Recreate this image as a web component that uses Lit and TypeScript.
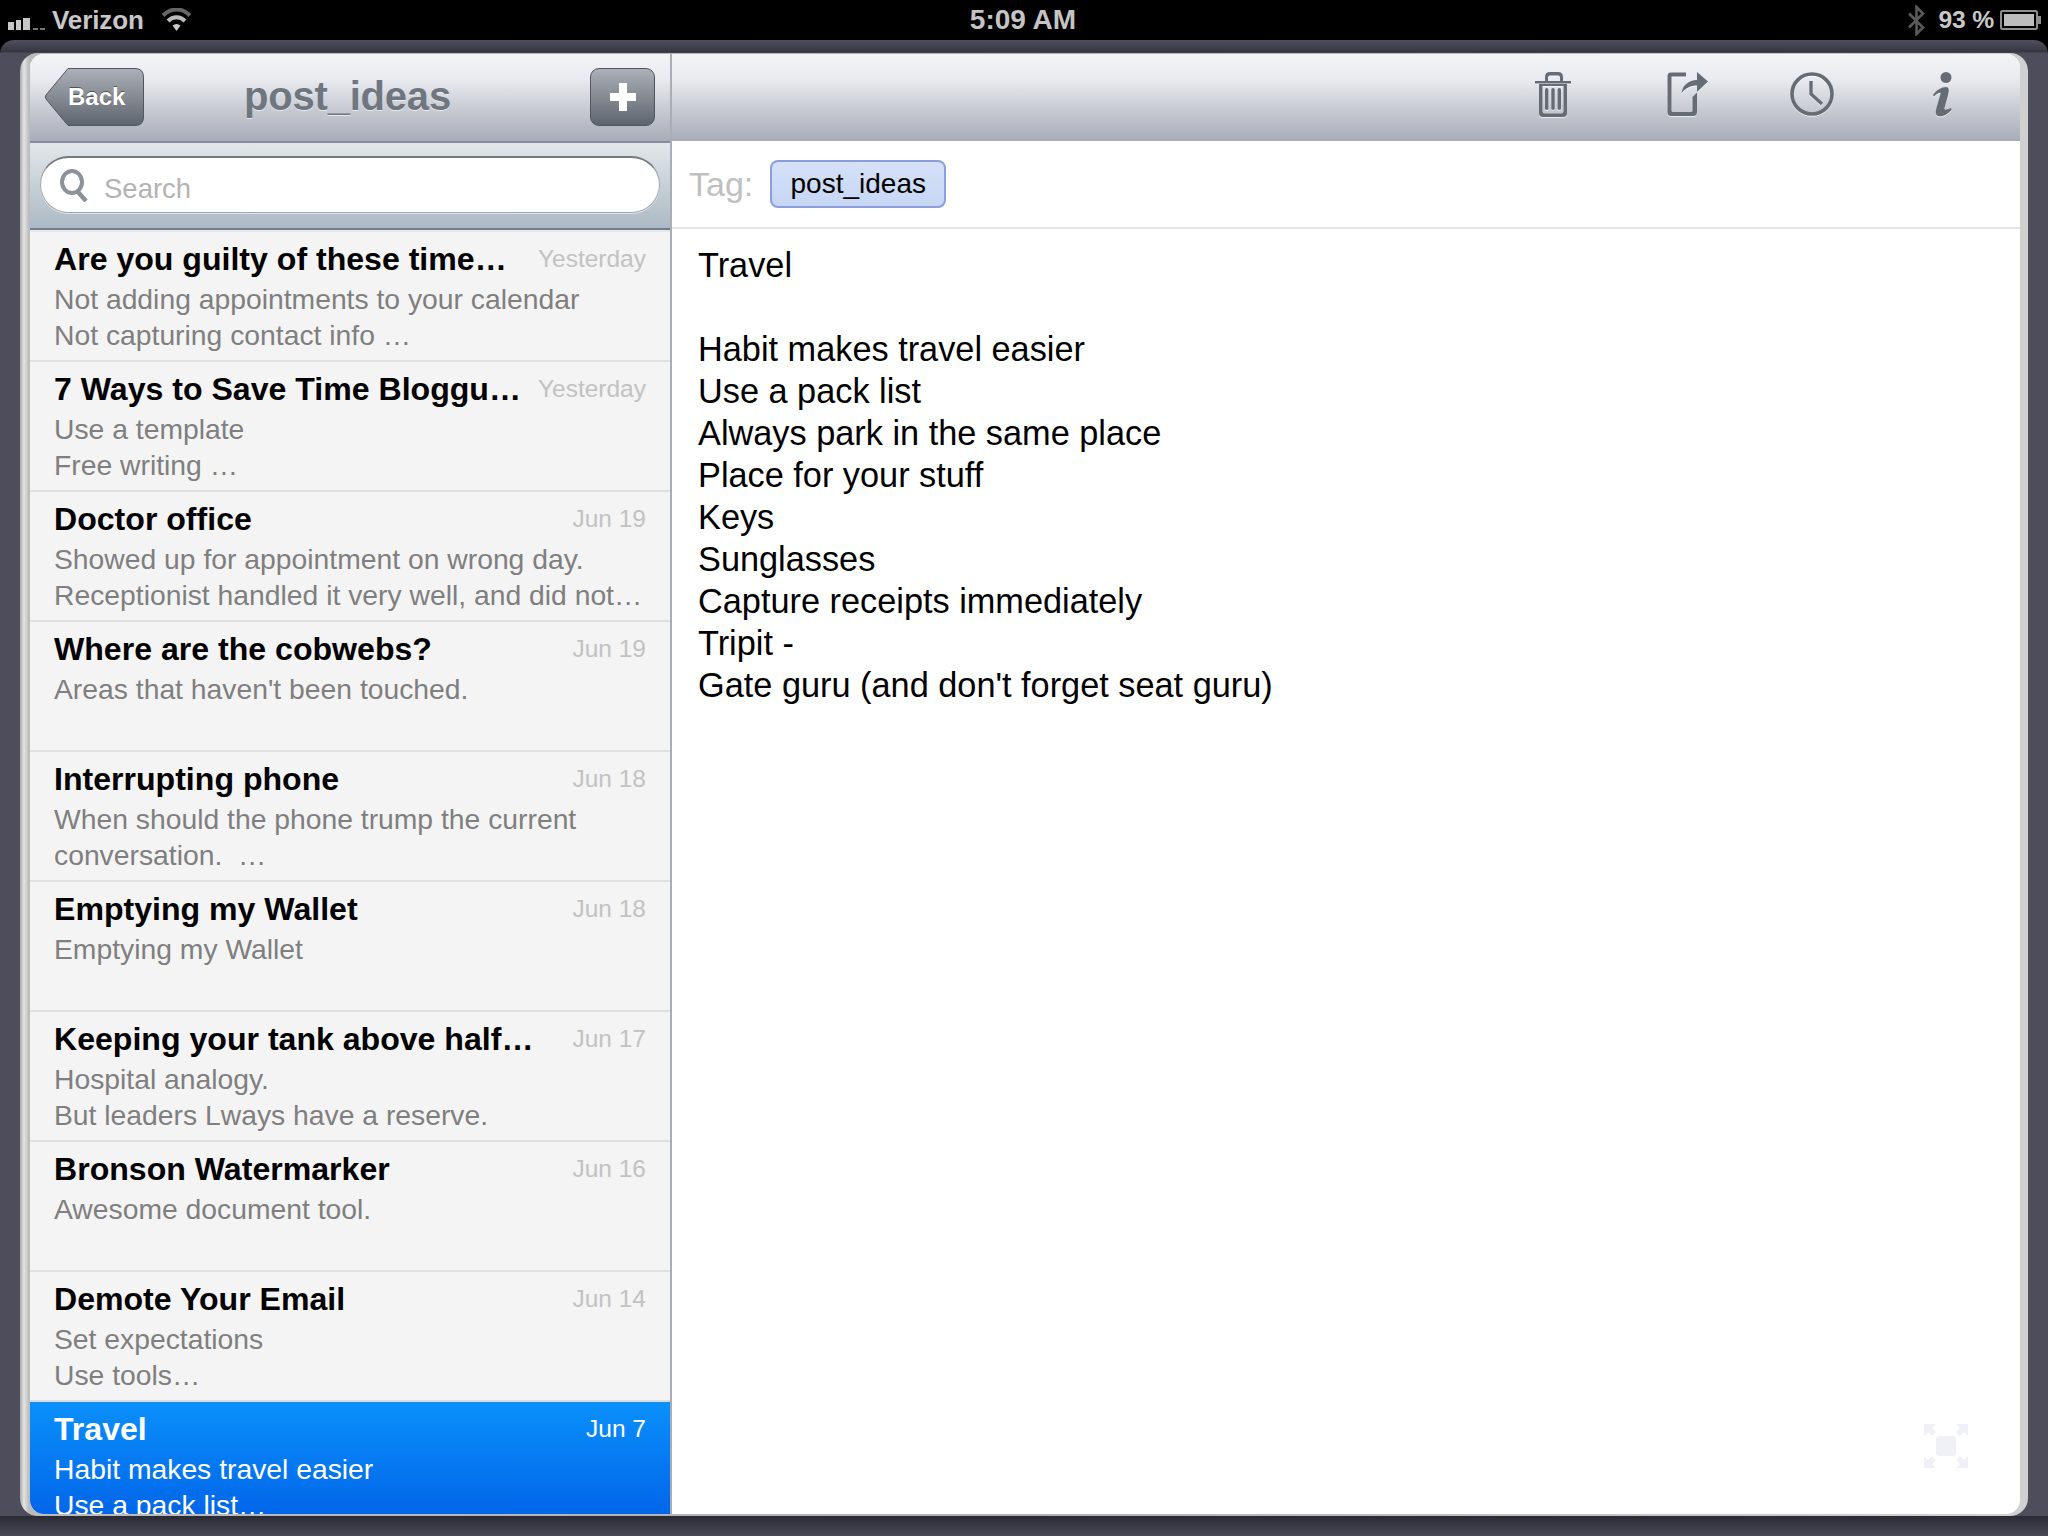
import { LitElement, html, css } from "lit";
import { customElement } from "lit/decorators.js";

interface Note { title: string; date: string; l1: string; l2: string; selected?: boolean; }

const NOTES: Note[] = [
  { title: "Are you guilty of these time…", date: "Yesterday", l1: "Not adding appointments to your calendar", l2: "Not capturing contact info …" },
  { title: "7 Ways to Save Time Bloggu…", date: "Yesterday", l1: "Use a template", l2: "Free writing …" },
  { title: "Doctor office", date: "Jun 19", l1: "Showed up for appointment on wrong day.", l2: "Receptionist handled it very well, and did not…" },
  { title: "Where are the cobwebs?", date: "Jun 19", l1: "Areas that haven't been touched.", l2: "" },
  { title: "Interrupting phone", date: "Jun 18", l1: "When should the phone trump the current", l2: "conversation.  …" },
  { title: "Emptying my Wallet", date: "Jun 18", l1: "Emptying my Wallet", l2: "" },
  { title: "Keeping your tank above half…", date: "Jun 17", l1: "Hospital analogy.", l2: "But leaders Lways have a reserve." },
  { title: "Bronson Watermarker", date: "Jun 16", l1: "Awesome document tool.", l2: "" },
  { title: "Demote Your Email", date: "Jun 14", l1: "Set expectations", l2: "Use tools…" },
  { title: "Travel", date: "Jun 7", l1: "Habit makes travel easier", l2: "Use a pack list…", selected: true },
];

const BODY = ["Travel", "", "Habit makes travel easier", "Use a pack list", "Always park in the same place", "Place for your stuff", "Keys", "Sunglasses", "Capture receipts immediately", "Tripit -", "Gate guru (and don't forget seat guru)"];

const FONT = css`"Liberation Sans", Arial, sans-serif`;

@customElement("app-root")
export class AppRoot extends LitElement {
  static styles = css`
    :host { display: block; width: 2048px; height: 1536px; background: #000; overflow: hidden; font-family: ${FONT}; }
    .screen { display: flex; flex-direction: column; height: 1536px; }

    .status { height: 40px; flex: none; display: flex; align-items: center; color: #c8c8c8; font-weight: bold; position: relative; padding: 0 7px 0 8px; box-sizing: border-box; }
    .status .signal { width: 37px; height: 12px; margin-top: 8px; display: block; }
    .status .carrier { font-size: 26px; margin-left: 7px; letter-spacing: -0.1px; }
    .status .wifi { width: 31px; height: 23px; margin-left: 17px; margin-top: -1px; display: block; }
    .status .clock { position: absolute; left: 0; right: 2px; top: 0; height: 40px; line-height: 39px; text-align: center; font-size: 28px; color: #c4c4c4; }
    .status .right { margin-left: auto; display: flex; align-items: center; }
    .status .bt { width: 17px; height: 31px; display: block; }
    .status .pct { font-size: 24.7px; margin-left: 14px; letter-spacing: -0.2px; }
    .status .batt { width: 41px; height: 20px; margin-left: 6px; display: block; }

    .frame { flex: 1; min-height: 0; display: flex; padding: 13px 20px 20px 20px; border-radius: 14px 14px 0 0;
      background: linear-gradient(#4f4f5e 0, #363642 12px, #4d4d5c 13px, #4d4d5c 1476px, #2a2a35 1476px, #4a4a58 1496px); }
    .app { flex: 1; min-width: 0; display: flex; border-radius: 18px; overflow: hidden; padding: 1px 8px 2px 10px;
      background: linear-gradient(90deg, #a9a9ab 0, #e4e4e4 4px, #bbbbbb 9px, #b0b0b0 50%, #d0d0d0 2000px); }
    .app-inner { flex: 1; min-width: 0; display: flex; overflow: hidden; background: #fff; border-radius: 14px; }

    .side { width: 640px; flex: none; display: flex; flex-direction: column; overflow: hidden; }
    .nav { height: 87px; flex: none; box-sizing: border-box; background: linear-gradient(#f3f4f7 0, #e9eaef 30%, #c9ccd4 62%, #a8acb8 100%); }
    .side .nav { display: flex; align-items: flex-start; padding: 14px 15px 0 14px; border-bottom: 2px solid #858c9e; height: 89px; }
    .back { width: 100px; height: 58px; position: relative; flex: none; color: #fff; font-weight: bold; font-size: 24px; line-height: 57px; text-shadow: 0 -1px 0 rgba(0,0,0,.45); }
    .back svg { position: absolute; left: 0; top: 0; display: block; }
    .back span { position: absolute; left: 24px; top: 0; }
    .title { margin-left: 100px; font-size: 40px; line-height: 56px; font-weight: bold; color: #6f7680; text-shadow: 0 1px 0 rgba(255,255,255,.6); letter-spacing: -0.2px; }
    .plus { margin-left: auto; width: 65px; height: 58px; box-sizing: border-box; border: 1px solid #50565f; border-radius: 9px; flex: none;
      background: linear-gradient(#acb0b8, #5e646e); display: flex; align-items: center; justify-content: center; }
    .plus svg { display: block; }

    .search { height: 87px; flex: none; box-sizing: border-box; padding: 13px 10px 0 10px; border-bottom: 2px solid #6d7e8d;
      background: linear-gradient(#e3e7ea, #acb9c4); }
    .pill { height: 57px; box-sizing: border-box; border-radius: 29px; background: #fff; border: 1px solid #9ea6ad; border-top: 2px solid #74797e; display: flex; align-items: center; padding-left: 19px; box-shadow: 0 1px 0 rgba(255,255,255,.6); }
    .pill svg { display: block; width: 28px; height: 34px; }
    .pill span { margin-left: 16px; font-size: 27.5px; line-height: 34px; padding-top: 8px; color: #b3b3b3; }

    .list { flex: 1; min-height: 0; overflow: hidden; background: #f4f4f4; }
    .row { height: 130px; box-sizing: border-box; padding: 7px 24px 0 24px; border-top: 2px solid #e0e0e0; overflow: hidden; }
    .row.first { border-top-color: #e6e8ea; }
    .row.sel { border-top-color: #dcdcdc; background: linear-gradient(#0a90fb, #0060e6); }
    .top { display: flex; align-items: flex-start; justify-content: space-between; height: 42px; }
    .name { font-size: 32.1px; line-height: 41px; font-weight: bold; color: #000; white-space: pre; }
    .date { font-size: 24.5px; line-height: 40px; color: #c2c2c2; }
    .sub { font-size: 28.3px; line-height: 36px; color: #7f7f7f; white-space: pre; height: 36px; }
    .row.sel .name, .row.sel .date, .row.sel .sub { color: #fff; }

    .divider { width: 2px; flex: none; background: #a9adb5; }

    .main { flex: 1; min-width: 0; display: flex; flex-direction: column; position: relative; }
    .main .nav { padding-top: 18px; display: flex; align-items: flex-start; }
    .tools-wrap { display: flex; align-items: flex-start; filter: drop-shadow(0 1px 0 rgba(255,255,255,.65)); }
    .tools-wrap svg { display: block; fill: #666c75; }
    .i-trash { margin-left: 863px; }
    .i-share { margin-left: 96px; }
    .i-clock { margin-left: 82px; }
    .i-info { margin-left: 98px; }
    .tagrow { height: 88px; flex: none; box-sizing: border-box; display: flex; align-items: flex-start; padding: 19px 0 0 17px; border-bottom: 2px solid #e4e6e9; }
    .tagrow .lbl { font-size: 34px; line-height: 48px; color: #c0c0c0; }
    .chip { margin-left: 17px; height: 48px; width: 176px; box-sizing: border-box; border: 2px solid #8a9ee0; border-radius: 8px; background: linear-gradient(#d6e1f8, #c6d6f4); font-size: 28px; line-height: 44px; text-align: center; color: #000; }
    .note { padding: 15px 0 0 26px; font-size: 34.3px; line-height: 42px; color: #000; }
    .note div { height: 42px; white-space: pre; }
    .full { position: absolute; right: 52px; bottom: 46px; width: 44px; height: 44px; display: block; }
  `;

  private row(n: Note, i: number) {
    const cls = `row${i === 0 ? " first" : ""}${n.selected ? " sel" : ""}`;
    return html`<div class=${cls}>
      <div class="top"><span class="name">${n.title}</span><span class="date">${n.date}</span></div>
      <div class="sub">${n.l1}</div>
      <div class="sub">${n.l2}</div>
    </div>`;
  }

  render() {
    return html`<div class="screen">
      <div class="status">
        <svg class="signal" viewBox="0 0 37 12">
          <rect x="0" y="4" width="6" height="8" fill="#c8c8c8"/>
          <rect x="8" y="2" width="5" height="10" fill="#c8c8c8"/>
          <rect x="15" y="0" width="7" height="12" fill="#c8c8c8"/>
          <rect x="25" y="10" width="5" height="2" fill="#777"/>
          <rect x="32" y="10" width="5" height="2" fill="#777"/>
        </svg>
        <span class="carrier">Verizon</span>
        <svg class="wifi" viewBox="0 0 31 23" fill="none">
          <path d="M2 7.500 C10 -0.500 21 -0.500 29 7.500" stroke="#666" stroke-width="4"/>
          <path d="M7 13 C12 8 19 8 24 13" stroke="#bbb" stroke-width="4"/>
          <path d="M11.500 17.500 L15.500 23 L19.500 17.500 C17 15.500 14 15.500 11.500 17.500 Z" fill="#ccc"/>
        </svg>
        <span class="clock">5:09 AM</span>
        <div class="right">
          <svg class="bt" viewBox="0 0 17 31" fill="none" stroke="#5a5a5a" stroke-width="2.600">
            <path d="M1 8.500 L15 22.500 L8.500 29 V2 L15 8.500 L1 22.500"/>
          </svg>
          <span class="pct">93 %</span>
          <svg class="batt" viewBox="0 0 41 20">
            <rect x="1" y="1" width="36" height="18" rx="1.500" fill="none" stroke="#8e8e8e" stroke-width="2"/>
            <rect x="4" y="4" width="30" height="12" fill="#bdbdbd"/>
            <rect x="38" y="6" width="3" height="8" fill="#8e8e8e"/>
          </svg>
        </div>
      </div>
      <div class="frame"><div class="app"><div class="app-inner">
        <div class="side">
          <div class="nav">
            <div class="back">
              <svg width="100" height="58" viewBox="0 0 100 58">
                <defs><linearGradient id="bk" x1="0" y1="0" x2="0" y2="1"><stop offset="0" stop-color="#acb0b8"/><stop offset="1" stop-color="#5e646e"/></linearGradient></defs>
                <path d="M24 .5 H91 Q99.500 .5 99.500 9 V49 Q99.500 57.500 91 57.500 H24 L2 31 Q.5 29 2 27 Z" fill="url(#bk)" stroke="#50565f"/>
              </svg>
              <span>Back</span>
            </div>
            <div class="title">post_ideas</div>
            <div class="plus">
              <svg width="26" height="28" viewBox="0 0 26 28"><path d="M9 0 H17 V10 H26 V18 H17 V28 H9 V18 H0 V10 H9 Z" fill="#fff"/></svg>
            </div>
          </div>
          <div class="search">
            <div class="pill">
              <svg viewBox="0 0 28 34" fill="none" stroke="#8b929a" stroke-width="4">
                <ellipse cx="12" cy="14" rx="10" ry="11"/>
                <path d="M18 24 L26 33" stroke-width="4.500"/>
              </svg>
              <span>Search</span>
            </div>
          </div>
          <div class="list">${NOTES.map((n, i) => this.row(n, i))}</div>
        </div>
        <div class="divider"></div>
        <div class="main">
          <div class="nav">
            <div class="tools-wrap">
              <svg class="i-trash" width="36" height="45" viewBox="0 0 36 45">
                <path fill-rule="evenodd" d="M10 9 V5 Q10 0 15 0 H23 Q28 0 28 5 V9 H36 V11.500 H0 V9 Z M13 9 H25 V5.500 Q25 3.500 23 3.500 H15 Q13 3.500 13 5.500 Z"/>
                <path fill-rule="evenodd" d="M4 12 H32 V41 Q32 45 28 45 H8 Q4 45 4 41 Z M7.500 14 V39 Q7.500 41.500 10 41.500 H26 Q28.500 41.500 28.500 39 V14 Z"/>
                <rect x="10" y="16" width="3.400" height="22" rx="1.700"/>
                <rect x="16.300" y="16" width="3.400" height="22" rx="1.700"/>
                <rect x="22.600" y="16" width="3.400" height="22" rx="1.700"/>
              </svg>
              <svg class="i-share" width="41" height="44" viewBox="0 0 41 44">
                <path d="M19 0.500 V4.500 H5 Q4.500 4.500 4.500 5 V38.500 Q4.500 40 6 40 H24 Q25.500 40 25.500 38.500 V25 L30 20.500 V40 Q30 44 26 44 H4 Q0.500 44 0.500 40 V4 Q0.500 .5 4 .5 Z"/>
                <path d="M14.500 21 C15.500 13 21.500 8.500 30 8 V0 L41 9.500 L30 20 V13.500 C23.500 13.500 18.500 16 14.500 21 Z"/>
              </svg>
              <svg class="i-clock" width="44" height="44" viewBox="0 0 44 44" style="fill:none">
                <circle cx="22" cy="22" r="20" fill="none" stroke="#666c75" stroke-width="3.600"/>
                <path d="M21 9 V22 L32 32" fill="none" stroke="#666c75" stroke-width="3.400"/>
              </svg>
              <svg class="i-info" width="20" height="45" viewBox="0 0 20 45">
                <circle cx="14" cy="5.500" r="5.500"/>
                <path d="M1 23 C4 18 10 15 14 15 C17 15 17.500 18 16 23 L12.500 36 C12 38 14 38.500 19 36 L19.500 38 C14 44 9 45 6 44 C3 43 3.500 39 5 34 L8.500 22 C9 20 6 20.500 2 24.500 Z"/>
              </svg>
            </div>
          </div>
          <div class="tagrow">
            <span class="lbl">Tag:</span>
            <span class="chip">post_ideas</span>
          </div>
          <div class="note">${BODY.map((l) => html`<div>${l}</div>`)}</div>
          <svg class="full" viewBox="0 0 44 44" fill="#f0f1f6">
            <rect x="12" y="12" width="20" height="20" rx="3"/>
            <path d="M0 0 H12 L8 4 L12 8 L8 12 L4 8 L0 12 Z"/>
            <path d="M44 0 H32 L36 4 L32 8 L36 12 L40 8 L44 12 Z"/>
            <path d="M0 44 H12 L8 40 L12 36 L8 32 L4 36 L0 32 Z"/>
            <path d="M44 44 H32 L36 40 L32 36 L36 32 L40 36 L44 32 Z"/>
          </svg>
        </div>
      </div></div></div>
    </div>`;
  }
}
